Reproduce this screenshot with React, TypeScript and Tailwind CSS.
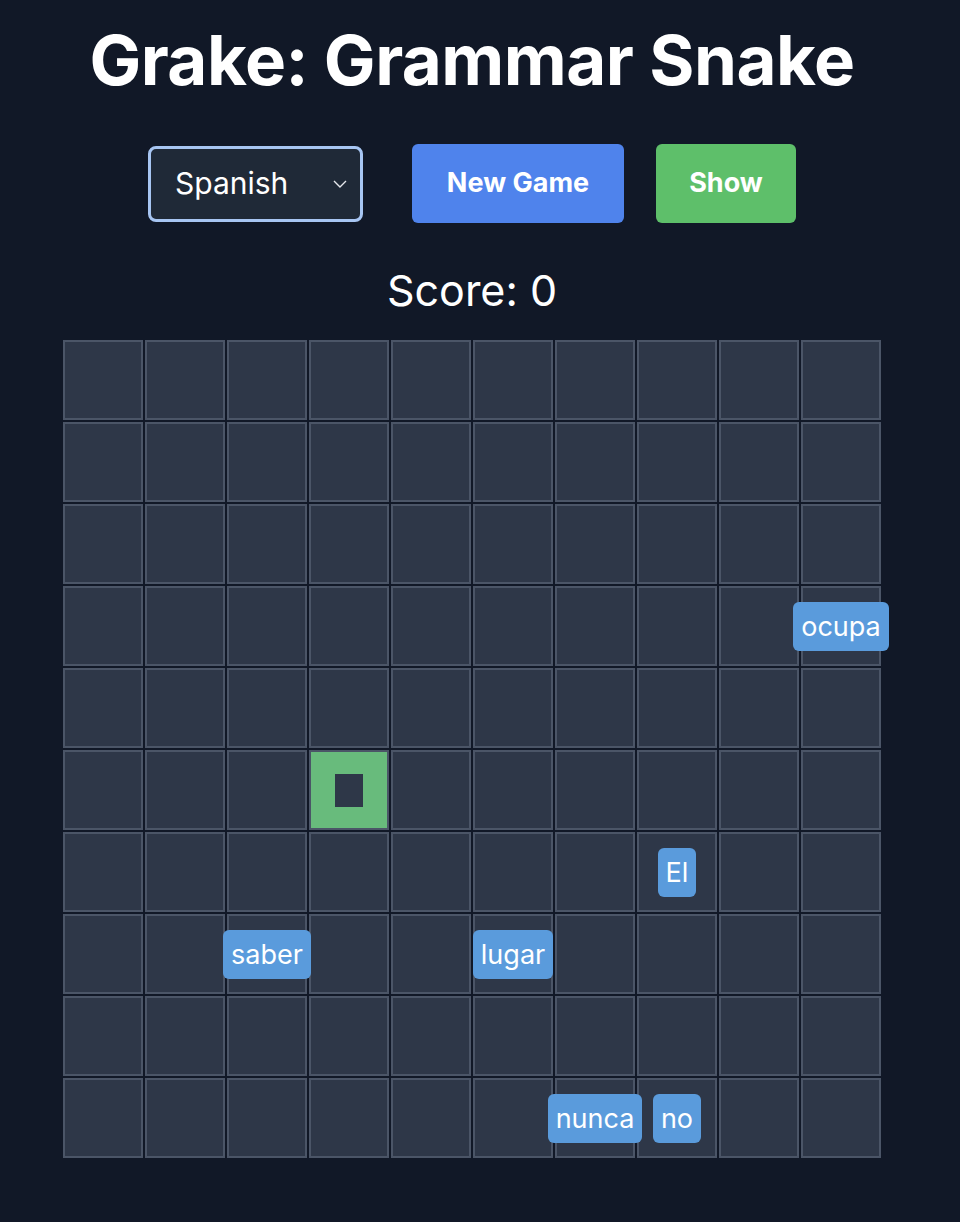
import { useState } from "react";

const SIZE = 10;

interface Word {
    row: number
    col: number
    text: string
}

const words: Word[] = [
    { row: 3, col: 9, text: "ocupa" },
    { row: 6, col: 7, text: "El" },
    { row: 7, col: 2, text: "saber" },
    { row: 7, col: 5, text: "lugar" },
    { row: 9, col: 6, text: "nunca" },
    { row: 9, col: 7, text: "no" },
];

const snake = { row: 5, col: 3 };

function Cell({ row, col }: { row: number; col: number }) {
    const word = words.find((w) => w.row === row && w.col === col);
    const isHead = snake.row === row && snake.col === col;

    return (
        <div
            className={
                isHead
                    ? "relative w-[80px] h-[80px] border-2 border-[#4b5567] bg-[#68bb7c] flex items-center justify-center"
                    : "relative w-[80px] h-[80px] border-2 border-[#4b5567] bg-[#2e3748] flex items-center justify-center"
            }
        >
            {isHead && <div className="w-[28px] h-[33px] bg-[#2e3748]" />}
            {word && (
                <span className="absolute z-10 whitespace-nowrap rounded-md bg-[#5a9bdc] px-2 py-[7px] text-[27px] leading-[35px] text-white">
                    {word.text}
                </span>
            )}
        </div>
    );
}

export default function App() {
    const [lang, setLang] = useState("Spanish");
    const score = 0;

    return (
        <div className="min-h-[1222px] bg-[#111827] text-white" style={{ fontFamily: "Inter, 'Noto Sans', sans-serif" }}>
            <div className="w-[944px] flex flex-col items-center pt-[22px]">
                <h1 className="text-[69px] leading-[76px] font-bold tracking-[-0.5px]">Grake: Grammar Snake</h1>

                <div className="flex items-center mt-[46px]">
                    <div className="relative">
                        <select
                            value={lang}
                            onChange={(e) => setLang(e.target.value)}
                            className="appearance-none w-[215px] h-[76px] rounded-lg border-[3px] border-[#a7c5f2] bg-[#1f2937] pl-[24px] text-[30px] text-white outline-none"
                        >
                            <option>Spanish</option>
                            <option>French</option>
                            <option>German</option>
                        </select>
                        <svg className="pointer-events-none absolute right-[15px] top-[30px]" width="16" height="16" viewBox="0 0 16 16" fill="none" stroke="#e5e7eb" strokeWidth="1.4">
                            <path d="M2 5l6 6 6-6" />
                        </svg>
                    </div>
                    <button className="ml-[49px] w-[212px] h-[79px] rounded-md bg-[#4f83ec] text-[27px] font-bold text-white">New Game</button>
                    <button className="ml-[32px] w-[140px] h-[79px] rounded-md bg-[#5ebf6a] text-[27px] font-bold text-white">Show</button>
                </div>

                <div className="mt-[42px] text-[43px] leading-[50px]">Score: {score}</div>

                <div className="mt-[25px] grid grid-cols-[repeat(10,80px)] gap-[2px]">
                    {Array.from({ length: SIZE * SIZE }).map((_, i) => (
                        <Cell key={i} row={Math.floor(i / SIZE)} col={i % SIZE} />
                    ))}
                </div>
            </div>
        </div>
    );
}
